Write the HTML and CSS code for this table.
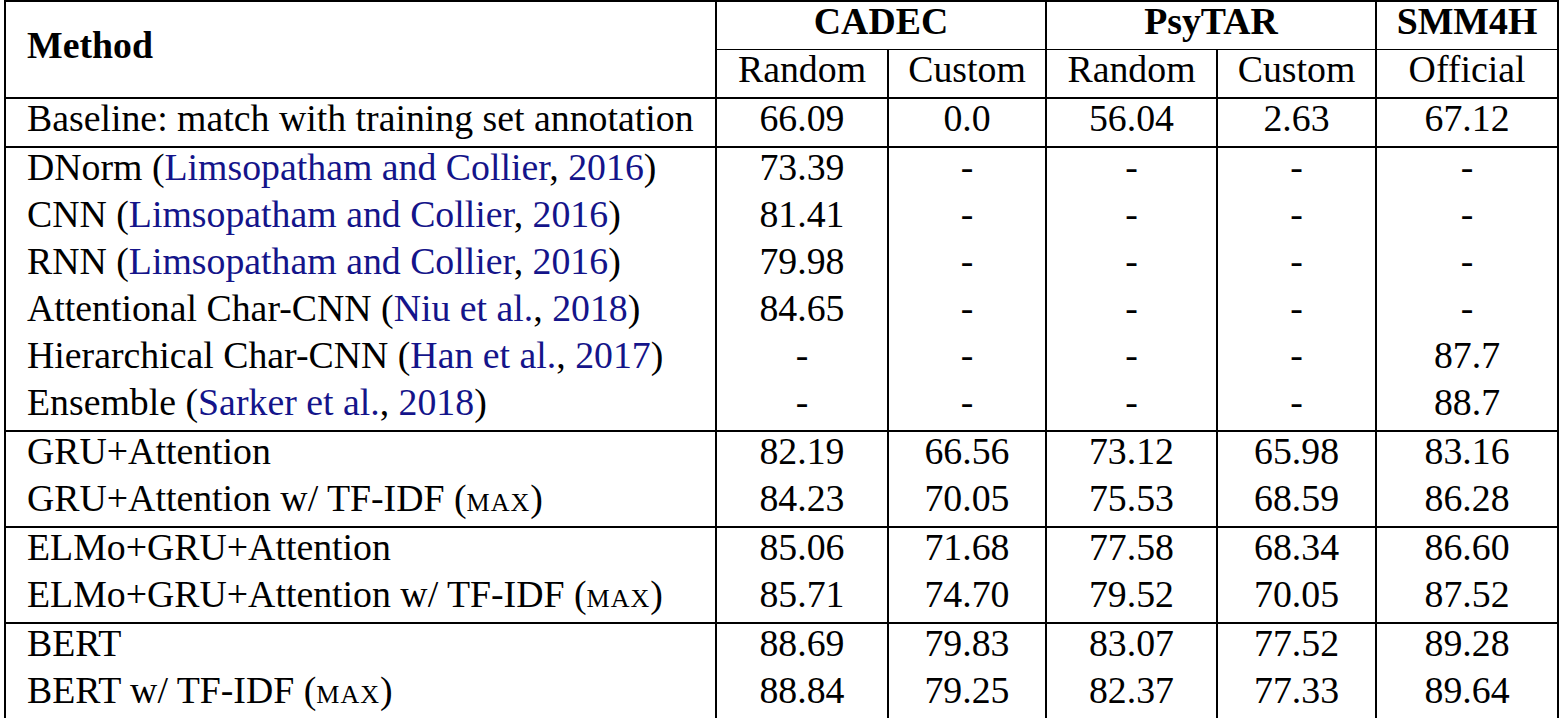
FILE: index.html
```html
<!DOCTYPE html>
<html lang="en">
<head>
<meta charset="utf-8">
<title>Results table</title>
<link rel="stylesheet" href="styles.css">
</head>
<body>
<table class="results">
  <colgroup>
    <col class="c-method">
    <col class="c-cadec-r">
    <col class="c-cadec-c">
    <col class="c-psy-r">
    <col class="c-psy-c">
    <col class="c-smm">
  </colgroup>
  <thead>
    <tr class="head-top">
      <th rowspan="2" class="method-head">Method</th>
      <th colspan="2" class="cl">CADEC</th>
      <th colspan="2" class="cl">PsyTAR</th>
      <th class="cl">SMM4H</th>
    </tr>
    <tr class="head-sub">
      <td>Random</td><td>Custom</td><td>Random</td><td>Custom</td><td>Official</td>
    </tr>
  </thead>
  <tbody class="group base">
    <tr><td class="name">Baseline: match with training set annotation</td><td>66.09</td><td>0.0</td><td>56.04</td><td>2.63</td><td>67.12</td></tr>
  </tbody>
  <tbody class="group prior">
    <tr><td class="name">DNorm (<span class="cite">Limsopatham and Collier</span>, <span class="cite">2016</span>)</td><td>73.39</td><td>-</td><td>-</td><td>-</td><td>-</td></tr>
    <tr><td class="name">CNN (<span class="cite">Limsopatham and Collier</span>, <span class="cite">2016</span>)</td><td>81.41</td><td>-</td><td>-</td><td>-</td><td>-</td></tr>
    <tr><td class="name">RNN (<span class="cite">Limsopatham and Collier</span>, <span class="cite">2016</span>)</td><td>79.98</td><td>-</td><td>-</td><td>-</td><td>-</td></tr>
    <tr><td class="name">Attentional Char-CNN (<span class="cite">Niu et al.</span>, <span class="cite">2018</span>)</td><td>84.65</td><td>-</td><td>-</td><td>-</td><td>-</td></tr>
    <tr><td class="name">Hierarchical Char-CNN (<span class="cite">Han et al.</span>, <span class="cite">2017</span>)</td><td>-</td><td>-</td><td>-</td><td>-</td><td>87.7</td></tr>
    <tr><td class="name">Ensemble (<span class="cite">Sarker et al.</span>, <span class="cite">2018</span>)</td><td>-</td><td>-</td><td>-</td><td>-</td><td>88.7</td></tr>
  </tbody>
  <tbody class="group">
    <tr><td class="name">GRU+Attention</td><td>82.19</td><td>66.56</td><td>73.12</td><td>65.98</td><td>83.16</td></tr>
    <tr><td class="name">GRU+Attention w/ TF-IDF (<span class="sc">max</span>)</td><td>84.23</td><td>70.05</td><td>75.53</td><td>68.59</td><td>86.28</td></tr>
  </tbody>
  <tbody class="group tight">
    <tr><td class="name">ELMo+GRU+Attention</td><td>85.06</td><td>71.68</td><td>77.58</td><td>68.34</td><td>86.60</td></tr>
    <tr><td class="name">ELMo+GRU+Attention w/ TF-IDF (<span class="sc">max</span>)</td><td>85.71</td><td>74.70</td><td>79.52</td><td>70.05</td><td>87.52</td></tr>
  </tbody>
  <tbody class="group tight">
    <tr><td class="name">BERT</td><td>88.69</td><td>79.83</td><td>83.07</td><td>77.52</td><td>89.28</td></tr>
    <tr><td class="name">BERT w/ TF-IDF (<span class="sc">max</span>)</td><td>88.84</td><td>79.25</td><td>82.37</td><td>77.33</td><td>89.64</td></tr>
  </tbody>
</table>
</body>
</html>
```
FILE: styles.css
```css
html, body {
  margin: 0;
  padding: 0;
  background: #ffffff;
}

body {
  padding: 0 0 0 4px;
  font-family: "Liberation Serif", "Times New Roman", Times, serif;
  color: #000000;
}

.results {
  border-collapse: collapse;
  table-layout: fixed;
  width: 1555px;
  border: 2px solid #000;
  font-family: "Liberation Serif", "Times New Roman", Times, serif;
  font-size: 37.8px;
}

.c-method { width: 711px; }
.c-cadec-r { width: 172px; }
.c-cadec-c { width: 158px; }
.c-psy-r { width: 171px; }
.c-psy-c { width: 159px; }
.c-smm { width: 182px; }

.results th,
.results td {
  height: 38px;
  padding: 0 0 9px;
  line-height: 38px;
  text-align: center;
  vertical-align: top;
  white-space: nowrap;
  border-left: 2px solid #000;
  border-right: 2px solid #000;
  font-weight: normal;
}

.results th {
  font-weight: bold;
}

.results .base td {
  height: 36px;
}

.results .prior td {
  height: 37.7px;
}

.results .tight td {
  height: 37.2px;
}

.results .cl {
  border-bottom: 1.5px solid #000;
}

.results .method-head {
  text-align: left;
  padding-left: 21px;
  padding-bottom: 10px;
  vertical-align: middle;
}

.results .name {
  text-align: left;
  padding-left: 21px;
}

.group {
  border-top: 2px solid #000;
}

.cite {
  color: #14148a;
}

.sc {
  font-variant: small-caps;
  letter-spacing: 1px;
}
```
